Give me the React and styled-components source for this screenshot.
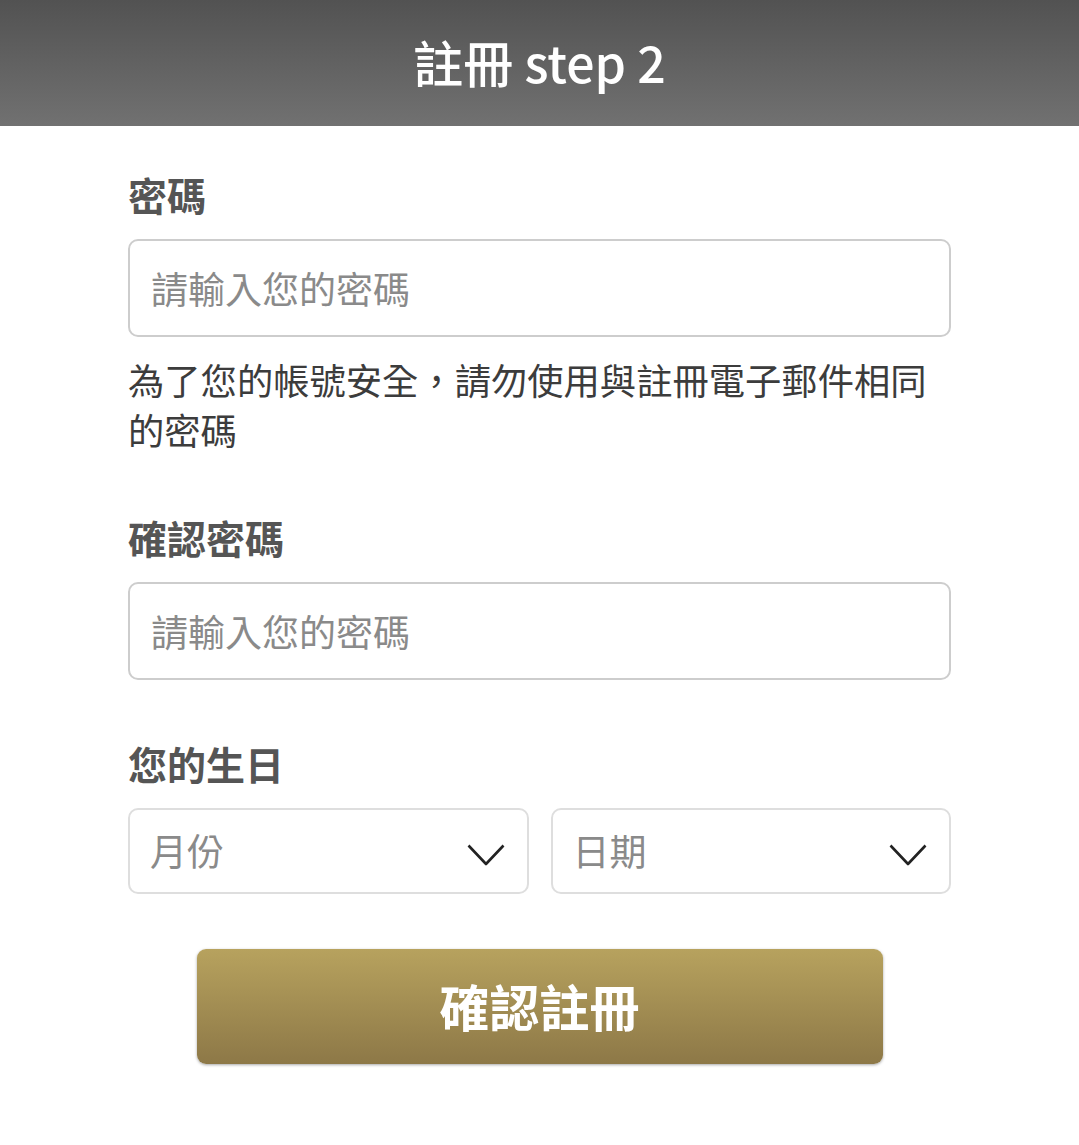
import React from 'react'
import styled, {createGlobalStyle} from 'styled-components'

const GlobalStyle = createGlobalStyle`
    html, body {
        margin: 0;
        padding: 0;
        background: #ffffff;
        font-family: "Noto Sans CJK TC", "Noto Sans", sans-serif;
    }
`

const Chevron = () => (
    <svg width="38" height="22" viewBox="0 0 38 22" fill="none">
        <path d="M1.5 1.5 L19 20 L36.5 1.5" stroke="#222" strokeWidth="2.6" strokeLinejoin="round" />
    </svg>
)

const App = () => {
    return (
        <>
            <GlobalStyle />
            <Header>
                <HeaderTitle>註冊 step 2</HeaderTitle>
            </Header>

            <Form>
                <Label>密碼</Label>
                <Input type="password" placeholder="請輸入您的密碼" />
                <Hint>為了您的帳號安全，請勿使用與註冊電子郵件相同的密碼</Hint>

                <Label spaced>確認密碼</Label>
                <Input type="password" placeholder="請輸入您的密碼" />

                <Label spaced>您的生日</Label>
                <SelectRow>
                    <Select>
                        <SelectText>月份</SelectText>
                        <Chevron />
                    </Select>
                    <Select>
                        <SelectText>日期</SelectText>
                        <Chevron />
                    </Select>
                </SelectRow>

                <SubmitButton type="button">確認註冊</SubmitButton>
            </Form>
        </>
    )
}

const Header = styled.div`
    height: 126px;
    display: flex;
    align-items: center;
    justify-content: center;
    background: linear-gradient(to bottom, #525252, #717171);
`
const HeaderTitle = styled.h1`
    margin: 0;
    margin-top: -4px;
    color: #ffffff;
    font-size: 50px;
    font-weight: 500;
    line-height: 1;
`

const Form = styled.div`
    display: flex;
    flex-direction: column;
    padding: 42px 128px 80px 128px;
`

const Label = styled.div`
    font-size: 39px;
    font-weight: 700;
    line-height: 53px;
    color: #555555;
    margin-top: ${props => props.spaced ? '57px' : '0'};
    margin-bottom: 18px;
`

const Input = styled.input`
    box-sizing: border-box;
    width: 100%;
    height: 98px;
    border: 2px solid #cdcdcd;
    border-radius: 10px;
    padding: 0 21px;
    font-family: inherit;
    font-size: 37px;
    color: #333;
    outline: none;
    &::placeholder {
        color: #8a8a8a;
    }
`

const Hint = styled.p`
    margin: 17px 0 0 0;
    font-size: 36.3px;
    line-height: 50px;
    color: #3c3c3c;
`

const SelectRow = styled.div`
    display: grid;
    grid-template-columns: 1fr 1fr;
    gap: 22px;
`
const Select = styled.div`
    box-sizing: border-box;
    height: 86px;
    border: 2px solid #dedede;
    border-radius: 10px;
    display: flex;
    align-items: center;
    justify-content: space-between;
    padding: 8px 22px 0 20px;
`
const SelectText = styled.span`
    font-size: 37px;
    color: #8a8a8a;
    margin-top: -10px;
`

const SubmitButton = styled.button`
    align-self: center;
    margin-top: 55px;
    width: 686px;
    height: 115px;
    border: none;
    border-radius: 9px;
    background: linear-gradient(to bottom, #b7a25e, #8d7847);
    box-shadow: 0 1px 3px rgba(0, 0, 0, 0.35);
    color: #ffffff;
    font-family: inherit;
    font-size: 50px;
    font-weight: 700;
    padding-bottom: 4px;
    cursor: pointer;
`

export default App
